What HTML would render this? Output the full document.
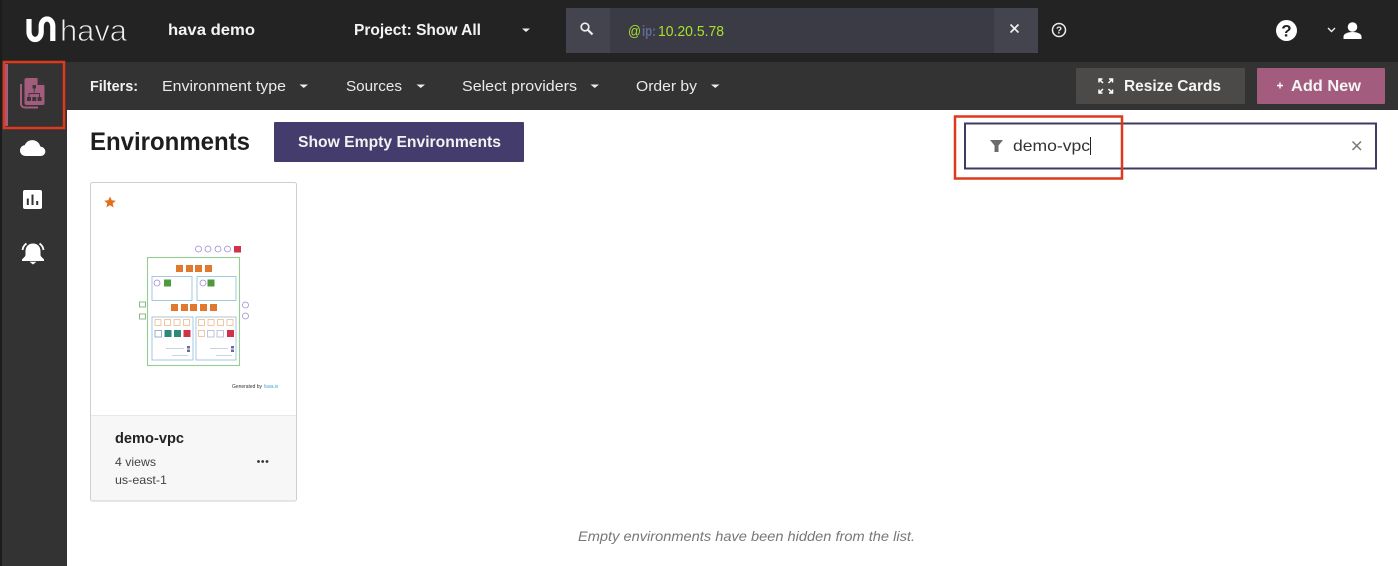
<!DOCTYPE html>
<html><head><meta charset="utf-8"><style>
html,body{margin:0;padding:0;background:#fff;width:1398px;height:566px;overflow:hidden}
svg{display:block}
text{font-family:"Liberation Sans",sans-serif;white-space:pre}
</style></head><body>
<svg width="1398" height="566" viewBox="0 0 1398 566" xmlns="http://www.w3.org/2000/svg">
<defs><filter id="soft" x="-5%" y="-5%" width="110%" height="110%"><feGaussianBlur stdDeviation="0.35"/></filter></defs>
<rect width="1398" height="566" fill="#fff"/>
<rect width="1398" height="62" fill="#232323"/>
<rect y="62" width="67" height="504" fill="#333333"/>
<rect x="67" y="62" width="1331" height="48" fill="#333333"/>
<rect width="2" height="566" fill="#1c1c1c"/>

<!-- logo -->
<path d="M29 19V32a6.100 7.500 0 0 0 12.200 0V26a5.800 7 0 0 1 11.600 0V41" fill="none" stroke="#fff" stroke-width="5.200"/>
<text x="60" y="41" font-size="31" fill="#f0f0f0" stroke="#232323" stroke-width=".9" paint-order="fill" textLength="67" lengthAdjust="spacingAndGlyphs">hava</text>

<text x="168" y="35" font-size="16" font-weight="bold" fill="#f4f4f4" textLength="87" lengthAdjust="spacingAndGlyphs">hava demo</text>
<text x="354" y="35" font-size="16" font-weight="bold" fill="#f4f4f4" textLength="127" lengthAdjust="spacingAndGlyphs">Project: Show All</text>
<path d="M522 28.500h8l-4 3.500z" fill="#eee"/>

<!-- search -->
<rect x="566" y="8" width="472" height="45" fill="#3a3b45"/>
<rect x="566" y="8" width="44" height="45" fill="#43444d"/>
<rect x="994" y="8" width="44" height="45" fill="#43444d"/>
<circle cx="585" cy="27" r="3.800" fill="none" stroke="#eee" stroke-width="1.700"/>
<path d="M588 30l4.500 4.500" stroke="#eee" stroke-width="2.200"/>
<path d="M1010.500 24.500l8 8m0-8l-8 8" stroke="#eee" stroke-width="1.700"/>
<text x="628" y="36" font-size="15" fill="#a8e02c" textLength="13" lengthAdjust="spacingAndGlyphs">@</text>
<text x="642" y="36" font-size="15" font-weight="bold" fill="#5d6b8e" textLength="14" lengthAdjust="spacingAndGlyphs">ip:</text>
<text x="658" y="36" font-size="15" fill="#a8e02c" textLength="66" lengthAdjust="spacingAndGlyphs">10.20.5.78</text>
<circle cx="1059" cy="30" r="6.500" fill="none" stroke="#eee" stroke-width="1.500"/>
<text x="1059" y="33.500" font-size="10" font-weight="bold" fill="#eee" text-anchor="middle">?</text>

<!-- right icons -->
<circle cx="1286.500" cy="30.500" r="10.500" fill="#fff"/>
<text x="1286.500" y="36.500" font-size="17" font-weight="bold" fill="#232323" text-anchor="middle">?</text>
<path d="M1328 28l3.500 3.500 3.500-3.500" fill="none" stroke="#eee" stroke-width="1.400"/>
<circle cx="1352.500" cy="27" r="4.800" fill="#fff"/>
<path d="M1343.500 39v-2.500c0-3 5-4.500 9-4.500s9 1.500 9 4.500v2.500z" fill="#fff"/>

<!-- filter bar -->
<text x="90" y="91" font-size="14.500" font-weight="bold" fill="#f2f2f2" textLength="48" lengthAdjust="spacingAndGlyphs">Filters:</text>
<text x="162" y="91" font-size="15" fill="#eaeaea" textLength="124" lengthAdjust="spacingAndGlyphs">Environment type</text>
<path d="M299.500 84.500h8.500l-4.250 3.500z" fill="#eee"/>
<text x="346" y="91" font-size="15" fill="#eaeaea" textLength="56" lengthAdjust="spacingAndGlyphs">Sources</text>
<path d="M416.500 84.500h8.500l-4.250 3.500z" fill="#eee"/>
<text x="462" y="91" font-size="15" fill="#eaeaea" textLength="115" lengthAdjust="spacingAndGlyphs">Select providers</text>
<path d="M590.500 84.500h8.500l-4.250 3.500z" fill="#eee"/>
<text x="636" y="91" font-size="15" fill="#eaeaea" textLength="61" lengthAdjust="spacingAndGlyphs">Order by</text>
<path d="M711 84.500h8.500l-4.250 3.500z" fill="#eee"/>

<rect x="1076" y="68" width="169" height="36" rx="1" fill="#4c4a48"/>
<g fill="none" stroke="#fff" stroke-width="1.500">
<path d="M1099 82.500v-3.500h3.500M1099.500 79.500l3.500 3.500M1112.500 82.500v-3.500h-3.500M1112 79.500l-3.500 3.500M1099 89.500v3.500h3.500M1099.500 92.500l3.500-3.500M1112.500 89.500v3.500h-3.500M1112 92.500l-3.500-3.500"/>
</g>
<text x="1124" y="91" font-size="16" font-weight="bold" fill="#f4f4f4" textLength="97" lengthAdjust="spacingAndGlyphs">Resize Cards</text>
<rect x="1257" y="68" width="128" height="36" rx="1" fill="#a35c7e"/>
<path d="M1277 85.500h6m-3-3v6" stroke="#fff" stroke-width="1.400"/>
<text x="1291" y="91" font-size="16" font-weight="bold" fill="#f4f4f4" textLength="70" lengthAdjust="spacingAndGlyphs">Add New</text>

<!-- sidebar -->
<rect x="5" y="64" width="3" height="62" fill="#a35c7e"/>
<path d="M21 84v20a3.500 3.500 0 0 0 3.500 3.500H38" fill="none" stroke="#a35c7e" stroke-width="2"/>
<path d="M26.500 78H37l7.500 7.500V103a2 2 0 0 1-2 2H26.500a2 2 0 0 1-2-2V80a2 2 0 0 1 2-2z" fill="#a35c7e"/>
<path d="M37.500 78.500l6.500 6.500h-6.500z" fill="#3a3338"/>
<rect x="32.500" y="85" width="3.500" height="3.500" fill="#3d343a"/>
<path d="M34.200 88.500v4M29 97v-3.500h10.500V97" fill="none" stroke="#3d343a" stroke-width=".9"/>
<rect x="27" y="97" width="4" height="4" fill="#3d343a"/><rect x="32.300" y="97" width="4" height="4" fill="#3d343a"/><rect x="37.600" y="97" width="4" height="4" fill="#3d343a"/>
<path d="M26 156c-3.500 0-6-2.300-6-5.500 0-2.800 2-5 4.800-5.400 1.200-3 4-5 7.500-5 4 0 7.300 2.800 8 6.400 2.900.3 5 2.400 5 5 0 2.800-2.200 4.500-5 4.500z" fill="#fff"/>
<rect x="23" y="190" width="19" height="19" rx="2" fill="#fff"/>
<path d="M27.800 198.500v6.500M32.500 194.500v10.500M37.200 201v4" stroke="#333" stroke-width="2"/>
<path d="M33 243.500c-5 0-7.500 3.500-7.500 8v3.500c0 1.500-2.500 3-3.500 4.500v1.500h22v-1.500c-1-1.500-3.500-3-3.500-4.500v-3.500c0-4.500-2.500-8-7.500-8z" fill="#fff"/>
<path d="M29.500 261.800h7l-3.500 2.700z" fill="#fff"/>
<path d="M22.500 250c.4-2.800 1.800-5 4-6.500M43.500 250c-.4-2.800-1.800-5-4-6.500" fill="none" stroke="#fff" stroke-width="1.800"/>

<!-- red highlight -->
<rect x="4" y="62" width="60" height="66" fill="none" stroke="#dd3a1d" stroke-width="2.500"/>

<!-- heading -->
<text x="90" y="150" font-size="25" font-weight="bold" fill="#1e1e1e" textLength="160" lengthAdjust="spacingAndGlyphs">Environments</text>
<rect x="274" y="122" width="250" height="40" rx="1" fill="#453c6e"/>
<text x="298" y="147" font-size="16" font-weight="bold" fill="#f2f2f2" textLength="203" lengthAdjust="spacingAndGlyphs">Show Empty Environments</text>

<!-- filter input -->
<rect x="965" y="123.500" width="411" height="45" fill="#fff" stroke="#3f3a63" stroke-width="2"/>
<path d="M990 140h13l-4.500 5.500v6.500h-4v-6.500z" fill="#6b6b6b"/>
<text x="1013" y="151" font-size="16" fill="#333" textLength="77" lengthAdjust="spacingAndGlyphs">demo-vpc</text>
<rect x="1090" y="137" width="1" height="18" fill="#222"/>
<path d="M1352.500 141.500l8.500 8.500m0-8.500l-8.500 8.500" stroke="#777" stroke-width="1.500"/>
<rect x="955" y="116.500" width="167" height="62" fill="none" stroke="#dd3a1d" stroke-width="2.500"/>

<!-- card -->
<rect x="90.500" y="182.500" width="206" height="318.500" rx="2" fill="#fff" stroke="#cfcfcf"/>
<path d="M91 415.500h205V499a1.500 1.500 0 0 1-1.500 1.500H92.500A1.500 1.500 0 0 1 91 499z" fill="#f7f7f7"/>
<path d="M91 415.500h205" stroke="#e8e8e8"/>
<path d="M110 196.500l1.700 3.800 4.100.4-3.100 2.700.9 4-3.600-2.100-3.600 2.100.9-4-3.100-2.700 4.100-.4z" fill="#e0701c"/>

<!-- diagram -->
<g filter="url(#soft)">
<g fill="none" stroke-width=".8">
<g stroke="#a08ad0">
<circle cx="198.500" cy="249" r="3"/><circle cx="208" cy="249" r="3"/><circle cx="218" cy="249" r="3"/><circle cx="227.500" cy="249" r="3"/>
<circle cx="245.500" cy="305" r="3"/><circle cx="245.500" cy="316" r="3"/>
<circle cx="157" cy="283" r="3"/><circle cx="203" cy="283" r="3"/>
</g>
<rect x="147.500" y="257.500" width="92" height="108" stroke="#94cc94" stroke-width="1.100"/>
<rect x="152" y="276.500" width="40" height="24" stroke="#8cbcd8"/>
<rect x="197" y="276.500" width="39" height="24" stroke="#8cbcd8"/>
<rect x="152" y="317" width="41" height="43" stroke="#8cbcd8"/>
<rect x="196" y="317" width="40" height="43" stroke="#8cbcd8"/>
<rect x="139.500" y="302" width="6" height="5" stroke="#6fa86f"/>
<rect x="139.500" y="314" width="6" height="5" stroke="#6fa86f"/>
</g>
<rect x="234" y="246" width="7" height="6.500" fill="#cf3348"/>
<g fill="#e0792e">
<rect x="176" y="265" width="7" height="7"/><rect x="186" y="265" width="7" height="7"/><rect x="195" y="265" width="7" height="7"/><rect x="205" y="265" width="7" height="7"/>
<rect x="171" y="304" width="7" height="7"/><rect x="181" y="304" width="7" height="7"/><rect x="190" y="304" width="7" height="7"/><rect x="200" y="304" width="7" height="7"/><rect x="210" y="304" width="7" height="7"/>
</g>
<rect x="164" y="279.500" width="7" height="7" fill="#4f9a3a"/>
<rect x="207.500" y="279.500" width="7" height="7" fill="#4f9a3a"/>
<g fill="none" stroke="#eeb98a" stroke-width=".8">
<rect x="155" y="319.500" width="6" height="6"/><rect x="164.500" y="319.500" width="6" height="6"/><rect x="174" y="319.500" width="6" height="6"/><rect x="183.500" y="319.500" width="6" height="6"/>
<rect x="198.500" y="319.500" width="6" height="6"/><rect x="208" y="319.500" width="6" height="6"/><rect x="217.500" y="319.500" width="6" height="6"/><rect x="227" y="319.500" width="6" height="6"/>
<rect x="198.500" y="330.500" width="6" height="6"/>
</g>
<rect x="155" y="330.500" width="6.500" height="6.500" fill="none" stroke="#7f9fc0" stroke-width=".8"/>
<rect x="164.500" y="330" width="7" height="7" fill="#2f8a78"/>
<rect x="174" y="330" width="7" height="7" fill="#2f8a78"/>
<rect x="183.500" y="330" width="7" height="7" fill="#cf3348"/>
<rect x="207.500" y="330.500" width="6.500" height="6.500" fill="none" stroke="#b5b5d5" stroke-width=".8"/>
<rect x="217" y="330.500" width="6.500" height="6.500" fill="none" stroke="#b5b5d5" stroke-width=".8"/>
<rect x="227" y="330" width="7" height="7" fill="#cf3348"/>
<g fill="#6a6aa5">
<rect x="187" y="346" width="3" height="2.500"/><rect x="187" y="349.500" width="3" height="2.500"/>
<rect x="231" y="346" width="3" height="2.500"/><rect x="231" y="349.500" width="3" height="2.500"/>
</g>
<g fill="#b8c8dc">
<rect x="166" y="348" width="18" height=".8"/><rect x="210" y="348" width="18" height=".8"/>
<rect x="172" y="355" width="16" height=".8"/><rect x="216" y="355" width="16" height=".8"/>
</g>
</g>
<text x="232" y="388" font-size="5" fill="#333" textLength="30" lengthAdjust="spacingAndGlyphs">Generated by</text>
<text x="264" y="388" font-size="5" fill="#3a9fd0" textLength="14" lengthAdjust="spacingAndGlyphs">hava.io</text>

<!-- card text -->
<text x="115" y="443" font-size="14.500" font-weight="bold" fill="#222" textLength="69" lengthAdjust="spacingAndGlyphs">demo-vpc</text>
<text x="115" y="466" font-size="12" fill="#444" textLength="41" lengthAdjust="spacingAndGlyphs">4 views</text>
<text x="115" y="484" font-size="12" fill="#444" textLength="52" lengthAdjust="spacingAndGlyphs">us-east-1</text>
<circle cx="258.500" cy="461.500" r="1.400" fill="#333"/><circle cx="262.700" cy="461.500" r="1.400" fill="#333"/><circle cx="267" cy="461.500" r="1.400" fill="#333"/>

<text x="578" y="541" font-size="14" font-style="italic" fill="#777" textLength="337" lengthAdjust="spacingAndGlyphs">Empty environments have been hidden from the list.</text>
</svg>
</body></html>
